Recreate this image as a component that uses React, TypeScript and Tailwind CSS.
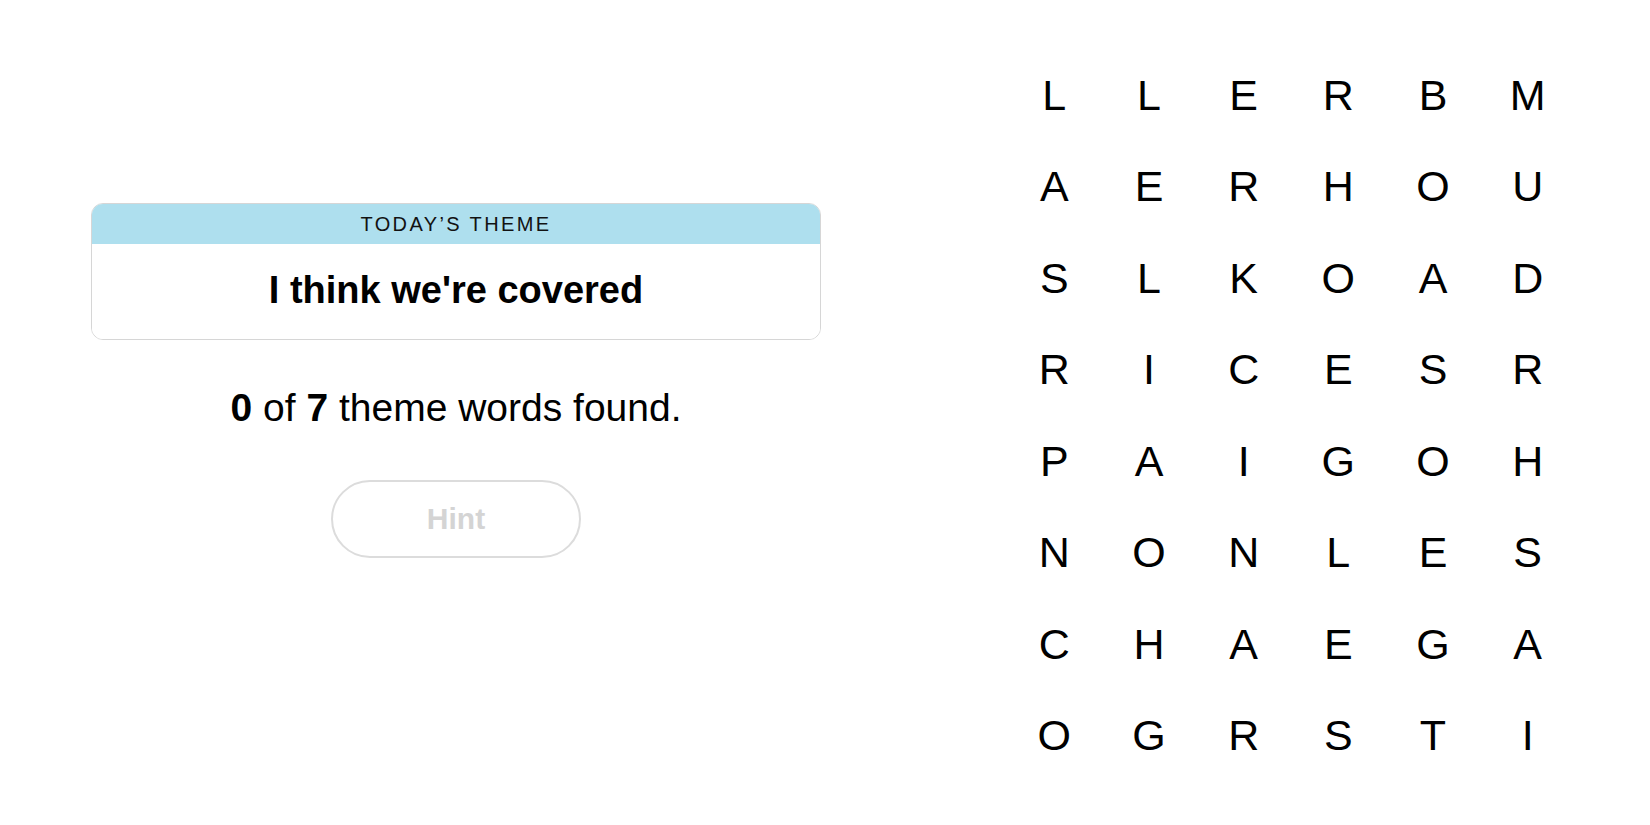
import React from "react";

const rows = [
  "LLERBM",
  "AERHOU",
  "SLKOAD",
  "RICESR",
  "PAIGOH",
  "NONLES",
  "CHAEGA",
  "OGRSTI",
];

function ThemeCard() {
  return (
    <div className="w-[730px] overflow-hidden rounded-[12px] border border-[#d6d6d6]">
      <div className="flex h-[40px] items-center justify-center bg-[#aedfee] text-[20px] uppercase tracking-[2.4px] text-[#121212]">
        Today’s Theme
      </div>
      <div className="flex h-[95px] items-center justify-center bg-white pb-[3px] text-[38px] font-bold text-black">
        I think we're covered
      </div>
    </div>
  );
}

function LetterGrid() {
  return (
    <div className="grid w-[568px] grid-cols-6">
      {rows.map((row, r) =>
        row.split("").map((ch, c) => (
          <div
            key={`${r}-${c}`}
            className="flex h-[91.5px] items-center justify-center text-[43px] text-black"
          >
            {ch}
          </div>
        ))
      )}
    </div>
  );
}

export default function App() {
  return (
    <div
      className="flex h-[825px] w-[1650px] bg-white"
      style={{ fontFamily: '"Liberation Sans", Arial, sans-serif' }}
    >
      <div className="flex w-[912px] flex-col items-center pt-[203px]">
        <ThemeCard />
        <p className="mt-[46px] text-[39px] leading-[43px] text-black">
          <span className="font-bold">0</span> of{" "}
          <span className="font-bold">7</span> theme words found.
        </p>
        <button
          type="button"
          className="mt-[51px] flex h-[78px] w-[250px] items-center justify-center rounded-full border-2 border-[#dcdcdc] bg-white pb-[2px] text-[30px] font-bold text-[#d4d4d4]"
        >
          Hint
        </button>
      </div>
      <div className="pl-[95px] pt-[49px]">
        <LetterGrid />
      </div>
    </div>
  );
}
